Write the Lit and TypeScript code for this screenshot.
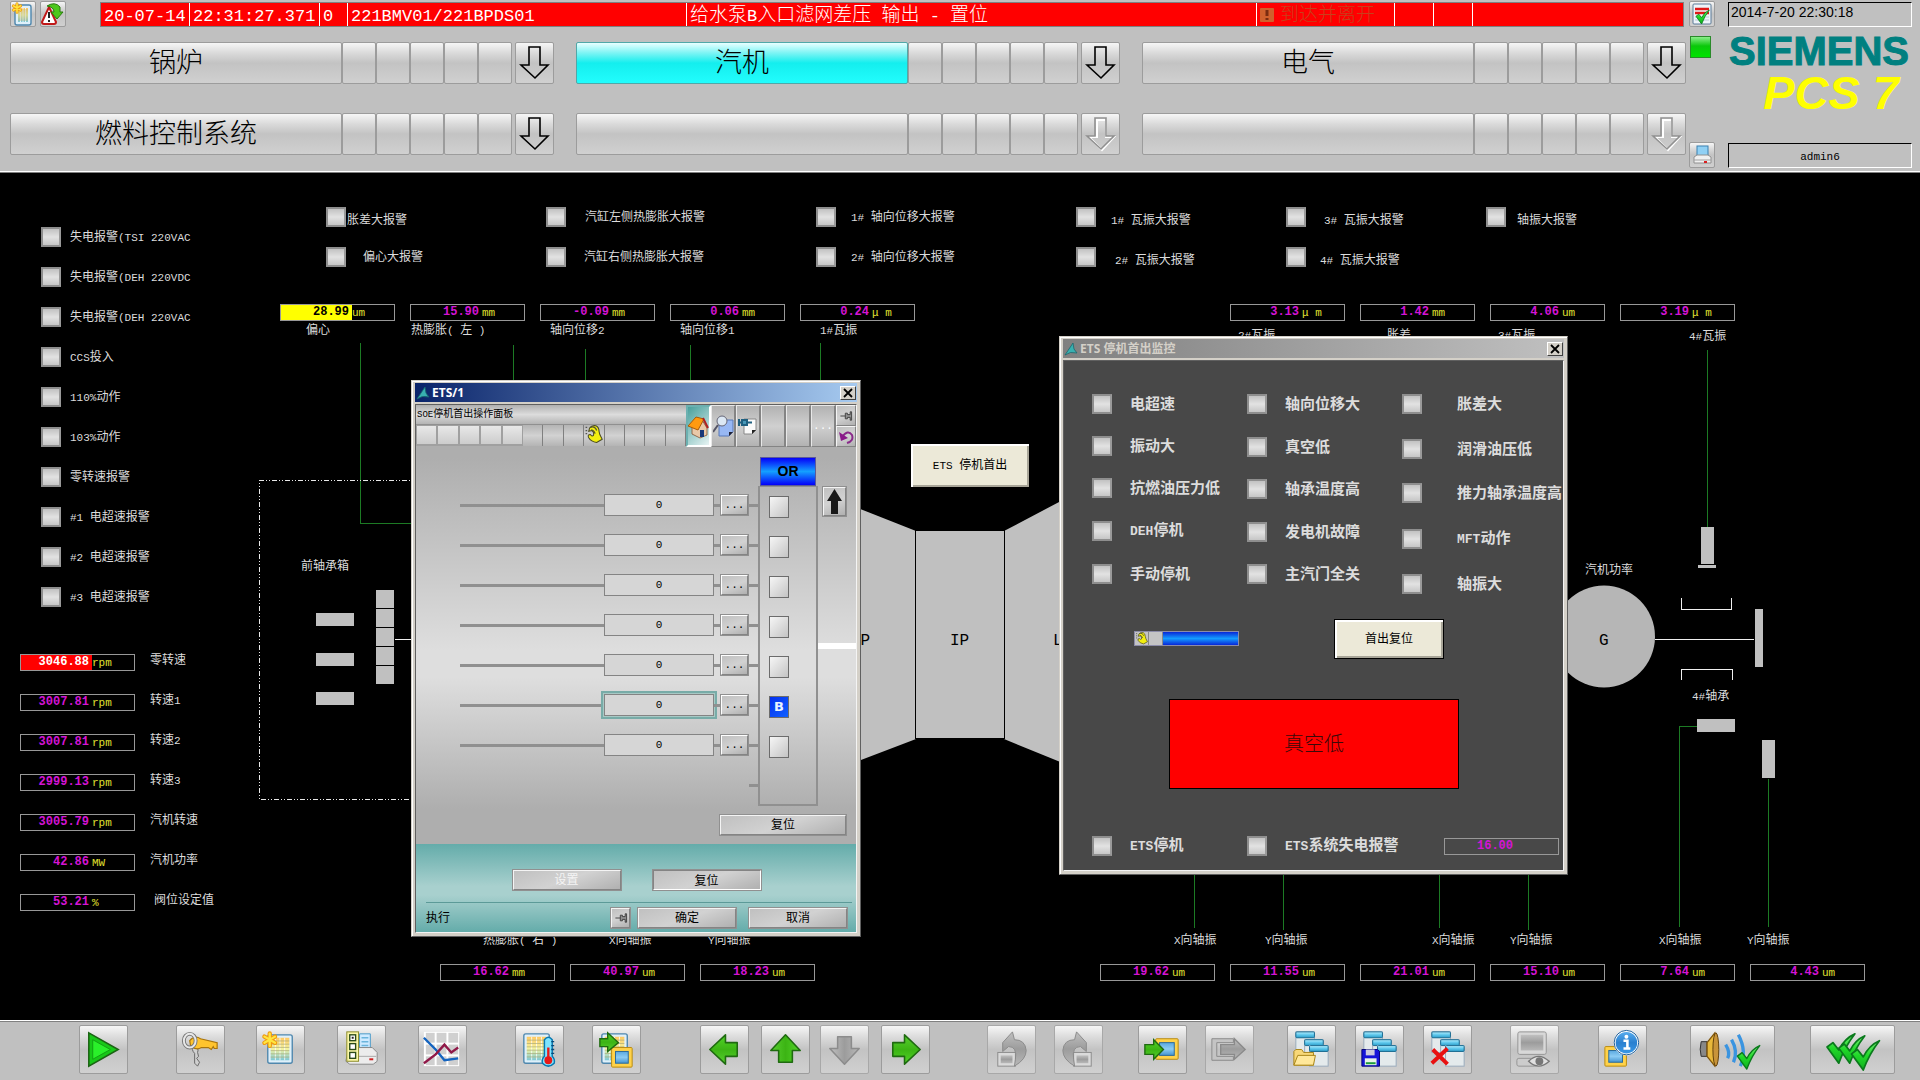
import { LitElement, html, svg, css, nothing, TemplateResult } from "lit";
import { customElement } from "lit/decorators.js";
import { classMap } from "lit/directives/class-map.js";

type Lamp = [x: number, y: number, text: string];
type Reading = { value: string; unit: string; state?: "warn" | "alarm"; text?: string };
type Placed = [x: number, value: string, unit: string, state?: "warn" | "alarm"];

/* Height of the overview area above the process picture. */
const ORIGIN = 173;

const leftLamps = [
  "失电报警(TSI 220VAC", "失电报警(DEH 220VDC", "失电报警(DEH 220VAC", "CCS投入", "110%动作",
  "103%动作", "零转速报警", "#1 电超速报警", "#2 电超速报警", "#3 电超速报警",
];

const leftReadings: Reading[] = [
  { value: "3046.88", unit: "rpm", state: "alarm", text: "零转速" },
  { value: "3007.81", unit: "rpm", text: "转速1" },
  { value: "3007.81", unit: "rpm", text: "转速2" },
  { value: "2999.13", unit: "rpm", text: "转速3" },
  { value: "3005.79", unit: "rpm", text: "汽机转速" },
  { value: "42.86", unit: "MW", text: "汽机功率" },
  { value: "53.21", unit: "%", text: "阀位设定值" },
];

const lampSpots: [number, number][] = [
  [326, 207], [326, 247], [546, 207], [546, 247], [816, 207], [816, 247],
  [1076, 207], [1076, 247], [1286, 207], [1286, 247], [1486, 207],
];

/* Captions: left edge and vertical centre. */
const captions: Lamp[] = [
  [347, 220, "胀差大报警"], [363, 257, "偏心大报警"],
  [585, 217, "汽缸左侧热膨胀大报警"], [584, 257, "汽缸右侧热膨胀大报警"],
  [851, 217, "1# 轴向位移大报警"], [851, 257, "2# 轴向位移大报警"],
  [1111, 220, "1# 瓦振大报警"], [1115, 260, "2# 瓦振大报警"],
  [1324, 220, "3# 瓦振大报警"], [1320, 260, "4# 瓦振大报警"], [1517, 220, "轴振大报警"],
  [306, 330, "偏心"], [411, 330, "热膨胀( 左 )"], [550, 330, "轴向位移2"], [680, 330, "轴向位移1"],
  [820, 330, "1#瓦振"], [1238, 335, "2#瓦振"], [1387, 335, "胀差"], [1498, 335, "3#瓦振"], [1689, 336, "4#瓦振"],
  [301, 566, "前轴承箱"], [1585, 570, "汽机功率"], [1692, 696, "4#轴承"],
  [483, 940, "热膨胀( 右 )"], [609, 940, "X向轴振"], [708, 940, "Y向轴振"],
  [1174, 940, "X向轴振"], [1265, 940, "Y向轴振"], [1432, 940, "X向轴振"], [1510, 940, "Y向轴振"],
  [1659, 940, "X向轴振"], [1747, 940, "Y向轴振"],
];

const topReadings: Placed[] = [
  [280, "28.99", "um", "warn"], [410, "15.90", "mm"], [540, "-0.09", "mm"], [670, "0.06", "mm"],
  [800, "0.24", "μ m"], [1230, "3.13", "μ m"], [1360, "1.42", "mm"], [1490, "4.06", "um"], [1620, "3.19", "μ m"],
];
const bottomReadings: Placed[] = [
  [440, "16.62", "mm"], [570, "40.97", "um"], [700, "18.23", "um"], [1100, "19.62", "um"], [1230, "11.55", "um"],
  [1360, "21.01", "um"], [1490, "15.10", "um"], [1620, "7.64", "um"], [1750, "4.43", "um"],
];

const areas: { name: string; active?: boolean; disabled?: boolean }[] = [
  { name: "锅炉" }, { name: "汽机", active: true }, { name: "电气" },
  { name: "燃料控制系统" }, { name: "", disabled: true }, { name: "", disabled: true },
];

const tripColumns: [cls: string, names: string[]][] = [
  ["c1", ["电超速", "振动大", "抗燃油压力低", "DEH停机", "手动停机"]],
  ["c2", ["轴向位移大", "真空低", "轴承温度高", "发电机故障", "主汽门全关"]],
  ["c3", ["胀差大", "润滑油压低", "推力轴承温度高", "MFT动作", "轴振大"]],
];

/* Latin runs are set in a monospaced face about half as wide as the ideographs. */
const mixed = (text: string) =>
  text.split(/([\x20-\x7eμ]+)/).filter(Boolean).map((run) =>
    /^[\x20-\x7eμ]/.test(run) ? html`<span class="latin">${run}</span>` : run);

const at = (x: number, y: number) => `left:${x}px;top:${y - ORIGIN}px`;

const sheet = (x: number, y: number, w: number, h: number) => svg`
  <rect x=${x} y=${y} width=${w} height=${h} rx="2" fill="#dff0fa" stroke="#4f87ad" stroke-width="1.4"/>
  <rect x=${x + 3} y=${y + 3} width=${w - 6} height=${h - 6} fill="url(#g-sheet)"/>
  ${[1, 2, 3].map((i) => svg`<line x1=${x + 3 + ((w - 6) * i) / 4} x2=${x + 3 + ((w - 6) * i) / 4} y1=${y + 3} y2=${y + h - 3} stroke="#fff" stroke-width=".8"/>`)}
  ${[1, 2, 3, 4, 5, 6].map((i) => svg`<line x1=${x + 3} x2=${x + w - 3} y1=${y + 3 + ((h - 6) * i) / 7} y2=${y + 3 + ((h - 6) * i) / 7} stroke="#a8a878" stroke-width=".7"/>`)}`;

const star = (x: number, y: number, k: number) => svg`
  <g transform="translate(${x} ${y}) scale(${k})" stroke="#f09a10" stroke-width="5" stroke-linecap="round">
    <path d="M0-7V7M-6-3.5L6 3.5M-6 3.5L6-3.5"/><path d="M0-7V7M-6-3.5L6 3.5M-6 3.5L6-3.5" stroke="#ffe640" stroke-width="2.6"/>
  </g>`;

const tick = (x: number, y: number, k: number) => svg`
  <path transform="translate(${x} ${y}) scale(${k})" d="M0 9L4 6L8 11Q12 3 19 0Q12 9 8 20Z" fill="url(#g-tick)" stroke="#0a7a1c" stroke-width="1.2" stroke-linejoin="round"/>`;

const pane = (x: number, y: number) => svg`
  <rect x=${x} y=${y} width="19" height="21" fill="#e4eaec" stroke="#9ab" />
  <rect x=${x} y=${y} width="19" height="6" rx="1" fill="url(#g-pane)" stroke="#1a6a90"/>`;
const panes = svg`${pane(8, 6)}${pane(17, 14)}${pane(22, 20)}`;

const frame = (x: number, y: number, w: number, h: number) => svg`
  <rect x=${x} y=${y} width=${w} height=${h} rx="1" fill="#ffd24a" stroke="#b88a10"/>
  <rect x=${x + 4} y=${y + 4} width=${w - 8} height=${h - 8} fill="url(#g-blue)" stroke="#2a6a9a"/>`;

const fatArrow = (turn: number, dim = false) => svg`
  <path transform="rotate(${turn} 24 24)" d="M9 24L25 9V17H37V31H25V39Z" fill=${dim ? "url(#g-dim)" : "url(#g-green)"} stroke=${dim ? "#8c8c8c" : "#1f6a10"} stroke-width="1.6" stroke-linejoin="round"/>`;

const hand = svg`
  <path d="M7 4Q10 0 15 1Q19 3 19 8L20 12L23 18L16 22Q9 21 6 16Q4 12 8 12Q10 15 12 13Q13 9 10 7L6 8Z" fill="#f2ee10" stroke="#4a4a20" stroke-width="1.3"/>
  <path d="M8 3Q14 1 16 7M9 6Q13 7 14 11" fill="none" stroke="#555530" stroke-width="1.6"/><path d="M2 3H4M2 7H4M2 11H4" stroke="#555" stroke-width="1.6"/>`;

const pin = svg`<path d="M1 10H8V6H11V8H15V4H17V16H15V12H11V14H8V10" fill="#909090" stroke="#444" stroke-width="1.4"/>`;

const curve = svg`
  <rect x="10" y="27" width="18" height="14" fill="#dadada" stroke="#8c8c8c"/><rect x="13" y="30" width="12" height="8" fill="url(#g-dim)"/>
  <path d="M25 6L15 17V26L21 21Q30 21 28 34L27 41Q39 34 39 25Q38 14 27 14Z" fill="url(#g-dim)" stroke="#8a8a8a" stroke-linejoin="round"/>`;

/* Bottom toolbar drawings, on a 48 unit square (wide ones on 84 by 48). */
const icons: Record<string, TemplateResult> = {
  play: svg`<path d="M9 7L39 24L9 41Z" fill="#18c818" stroke="#1c6414" stroke-width="1.6"/><path d="M13 14L31 24L13 34Z" fill="#2af02a" stroke="#12a012"/>`,
  key: svg`<path d="M17 20Q23 22 21 27L22 31L20 33L23 37L21 41L18 38V28Q14 24 17 20Z" fill="#d0d0d0" stroke="#666"/>
    <path d="M13 15Q18 9 24 13L41 17V23H38L37 21L35 24L32 22H25Q20 25 14 21Z" fill="#ffc42e" stroke="#a8740c" stroke-width="1.2"/>
    <ellipse cx="13" cy="15" rx="6" ry="7" fill="none" stroke="#777" stroke-width="4"/><ellipse cx="13" cy="15" rx="6" ry="7" fill="none" stroke="#e8e8e8" stroke-width="2"/>`,
  table: svg`${sheet(11, 9, 25, 29)}${star(13, 14, 0.9)}`,
  print: svg`<path d="M22 8H33V24H22Z" fill="#cfeaff" stroke="#4a9ac8"/><path d="M24 12H31M24 16H31M24 20H31" stroke="#6ab4dc" stroke-width="1.6"/>
    <path d="M10 26L16 22H35L40 27V36L36 39H12L8 36Z" fill="#ececec" stroke="#888"/><path d="M9 31H39" stroke="#aaa"/><rect x="32" y="33" width="4" height="2" fill="#d02020"/>
    <rect x="9" y="6" width="12" height="30" fill="#fbf8a8" stroke="#8a8a28"/>
    <g fill="#fff" stroke="#2a4a18" stroke-width="1.4"><rect x="12" y="9" width="6" height="6"/><rect x="12" y="18" width="6" height="6"/><rect x="12" y="27" width="6" height="6"/></g><rect x="14" y="11" width="2" height="2" fill="#222"/>`,
  trend: svg`<rect x="5" y="6" width="36" height="35" fill="#fff"/><g fill="#d0d0d0"><rect x="7" y="7" width="9" height="10"/><rect x="18" y="7" width="10" height="10"/><rect x="30" y="7" width="10" height="10"/><rect x="7" y="19" width="9" height="10"/><rect x="18" y="19" width="10" height="10"/><rect x="30" y="19" width="10" height="10"/><rect x="7" y="31" width="9" height="9"/><rect x="18" y="31" width="10" height="9"/><rect x="30" y="31" width="10" height="9"/></g>
    <path d="M5 12L17 24L26 35L40 33" fill="none" stroke="#1464c0" stroke-width="2.4"/><path d="M5 38L17 29L26 19L33 27L40 22" fill="none" stroke="#901848" stroke-width="2.4"/>`,
  thermo: svg`${sheet(8, 8, 26, 30)}<path d="M29 14Q33 9 37 14V31Q40 34 39 38Q33 44 27 38Q26 34 29 31Z" fill="#7fe4ff" stroke="#0878b0" stroke-width="1.5"/><circle cx="33" cy="35" r="4" fill="#e81818"/><path d="M33 22V33" stroke="#e81818" stroke-width="2.4"/><path d="M36 16H39M36 20H39M36 24H39M36 28H39" stroke="#084a78" stroke-width="1.4"/>`,
  swap: svg`${sheet(9, 8, 26, 30)}${frame(19, 22, 21, 20)}<path d="M7 13H15V7L26 17L15 26V21H7Z" fill="url(#g-green)" stroke="#1f6a10" stroke-width="1.4"/>`,
  left: svg`${fatArrow(0)}`, up: svg`${fatArrow(90)}`, down: svg`${fatArrow(270, true)}`, right: svg`${fatArrow(180)}`,
  undo: curve, redo: svg`<g transform="matrix(-1 0 0 1 47 0)">${curve}</g>`,
  enter: svg`${frame(17, 13, 23, 21)}<path d="M6 19H15V14L25 24L15 34V29H6Z" fill="url(#g-green)" stroke="#1f6a10" stroke-width="1.4"/>`,
  exit: svg`<path d="M6 13H28V17H11V31H28V35H6Z" fill="#c4c4c4" stroke="#8a8a8a"/><path d="M15 19H29V13L40 24L29 34V29H15Z" fill="url(#g-dim)" stroke="#8a8a8a" stroke-width="1.4"/>`,
  open: svg`${panes}<path d="M6 26L8 24H14L16 27H26V40H6Z" fill="#f8d878" stroke="#a88418"/><path d="M6 40L10 30H28L26 40Z" fill="#ffe89a" stroke="#a88418"/>`,
  save: svg`${panes}<path d="M6 24H22L24 26V41H6Z" fill="#1414d8" stroke="#040478"/><rect x="10" y="24" width="9" height="6" fill="#ccd"/><rect x="9" y="33" width="12" height="7" fill="#e8f4e8"/><rect x="10" y="37" width="10" height="2" fill="#1a9a3a"/>`,
  drop: svg`${panes}<path d="M9 24L24 39M24 23L8 38" stroke="#e81010" stroke-width="4"/>`,
  watch: svg`<rect x="7" y="6" width="29" height="23" rx="2" fill="#d8d8d8" stroke="#959595"/><rect x="10" y="9" width="23" height="16" fill="url(#g-dim)"/><rect x="6" y="33" width="20" height="8" rx="2" fill="#ccc" stroke="#959595"/><path d="M18 36Q28 26 39 36Q28 46 18 36Z" fill="#e0e0e0" stroke="#777" stroke-width="1.4"/><circle cx="29" cy="36" r="4" fill="#777"/>`,
  info: svg`${frame(6, 21, 22, 20)}<circle cx="28" cy="17" r="12" fill="url(#g-info)" stroke="#fff" stroke-width="2"/><circle cx="28" cy="17" r="12.5" fill="none" stroke="#1a5a94"/><circle cx="28" cy="11" r="2" fill="#fff"/><path d="M25 15H29V23M25 23H32" stroke="#fff" stroke-width="2.6" fill="none"/>`,
  sound: svg`<path d="M10 16H16V31H10Q8 24 10 16Z" fill="#888" stroke="#333"/><path d="M16 17L24 7Q29 24 24 41L16 31Z" fill="#e8b83a" stroke="#80560c" stroke-width="1.4"/><ellipse cx="25" cy="24" rx="3" ry="17" fill="#c8943a" stroke="#60400a"/>
    <g fill="none" stroke="#3a94e0" stroke-width="3.4"><path d="M35 19Q40 27 37 33"/><path d="M41 14Q48 26 43 37"/><path d="M48 9Q57 26 50 41"/></g>${tick(47, 20, 1.2)}`,
  ticks: svg`${tick(16, 8, 1.5)}${tick(28, 10, 1.4)}${tick(41, 15, 1.5)}`,
};

/* Toolbar: share of free space before the button, icon, caption. */
const tools: [space: number, icon: string, title: string, state?: "dim" | "wide"][] = [
  [79, "play", "运行"], [48, "key", "登录"], [31, "table", "报警列表"], [32, "print", "报表"], [32, "trend", "趋势"],
  [48, "thermo", "过程值"], [28, "swap", "画面切换"], [59, "left", "向左"], [12, "up", "向上"], [11, "down", "向下", "dim"],
  [12, "right", "向右"], [57, "undo", "后退", "dim"], [18, "redo", "前进", "dim"], [35, "enter", "存储画面"], [18, "exit", "调用画面", "dim"],
  [33, "open", "打开组合"], [19, "save", "保存组合"], [19, "drop", "删除组合"], [38, "watch", "监视", "dim"], [39, "info", "信息"],
  [43, "sound", "消音", "wide"], [35, "ticks", "确认", "wide"],
];

@customElement("app-root")
export class AppRoot extends LitElement {
  static styles = css`
    :host {
      display: block; --cjk: "Liberation Sans", "Noto Sans CJK SC", sans-serif; --mono: "Liberation Mono", "Noto Sans CJK SC", monospace;
      font: 12px/14px var(--cjk); color: #dcdcdc; --latin: 11px;
    }
    * { box-sizing: border-box; }
    button, input { font: inherit; color: inherit; margin: 0; padding: 0; border-radius: 0; }
    button { display: grid; place-items: center; }
    svg { display: block; }
    .latin { font-family: var(--mono); font-size: var(--latin); white-space: pre; }
    .defs { position: absolute; }
    .screen { min-height: 100vh; display: flex; flex-direction: column; background: #000; overflow: hidden; }

    .soft { border: 1px solid #9c9c9c; border-radius: 2px; background: linear-gradient(#f6f6f6, #dadada 25%, #c3c3c3 50%, #d0d0d0); }
    .top { display: flex; color: #000; background: #c0c0c0; padding: 1px 8px 0 10px; border-bottom: 1px solid #808080; box-shadow: inset 0 -1px #fff; }
    .main { flex: 1; min-width: 0; display: flex; flex-direction: column; gap: 15px; padding-bottom: 17px; }
    .line { display: flex; gap: 4px; }
    .mini { width: 26px; height: 26px; }
    .alarm { flex: 1; margin: 1px 2px 0 30px; border: 1px solid #808080; background: #f00; color: #fff; height: 25px; display: grid;
      grid-template-columns: 89px 130px 28px 339fr 570fr 138px 39px 39px 210fr; font-size: 19px; line-height: 23px; font-weight: 300; --latin: 17px; white-space: nowrap; }
    .alarm > span { padding-left: 3px; border-right: 1px solid #fff; overflow: hidden; }
    .alarm > span:last-child { border: 0; }
    .alarm .gone { color: #c8401c; display: flex; gap: 6px; align-items: center; }
    .areas { display: grid; grid-template-columns: repeat(3, minmax(0, 1fr)); gap: 29px 22px; }
    .area { display: flex; height: 42px; }
    .area .name { flex: 1; font-size: 27px; line-height: 38px; font-weight: 300; }
    .area .name.active { background: linear-gradient(#e8ffff, #7cf4f4 25%, #14eeee 50%, #22fdfd); border-color: #50a8a8; }
    .area .cell { width: 34px; }
    .area .fold { width: 39px; margin-left: 3px; }
    .side { display: flex; flex-direction: column; gap: 9px; margin: 0 13px 0 3px; padding-bottom: 4px; width: 26px; }
    .ok { width: 21px; height: 22px; margin-left: 1px; border: 1px solid #2a8a2a; background: linear-gradient(#8aee8a, #0ac80a 45%, #00e400); }
    .side :last-child { margin-top: auto; }
    .brand { width: 184px; display: flex; flex-direction: column; padding: 1px 0 4px; white-space: nowrap; }
    .inset { height: 25px; border: 1px solid; border-color: #000 #fff #fff #000; padding-left: 2px; font-size: 14px; line-height: 18px; }
    .inset.user { margin-top: auto; text-align: center; line-height: 22px; padding: 0; }
    .maker { font: bold 40px/48px "Liberation Sans", sans-serif; color: #008080; -webkit-text-stroke: 1px #008080; padding-left: 1px; }
    .product { font: italic bold 47px/36px "Liberation Sans", sans-serif; color: #ff0; text-align: right; padding-right: 13px; }

    .plant { flex: 1; position: relative; min-height: 847px; }
    .drawing { position: absolute; left: 0; top: 0; }
    .pin { position: absolute; white-space: nowrap; }
    .lamp { display: block; flex: none; width: 20px; height: 20px; border: 2px solid #8e8e8e; border-right-color: #9a9a9a; background: linear-gradient(#c2c2c2, #e2e2e2 50%, #c6c6c6); }
    .column { position: absolute; display: flex; flex-direction: column; white-space: nowrap; }
    .lamps { left: 41px; top: 54px; gap: 20px; }
    .lamps > div { display: flex; gap: 9px; align-items: center; }
    .readings { left: 20px; top: 481px; gap: 23px; }
    .readings > div { display: flex; gap: 15px; height: 17px; line-height: 12px; }
    .readings > div:last-child { gap: 19px; }
    .value { width: 115px; height: 17px; border: 1px solid #989898; display: flex; font: 11px/15px var(--mono); color: #e0e030; white-space: pre; text-align: left; }
    .value b { width: 71px; text-align: right; padding-right: 3px; font-size: 12px; color: #d414d4; }
    .value i { font-style: normal; padding-top: 1px; }
    .value.warn b { background: #ff0; color: #000; }
    .value.alarm-on b { background: #f00; color: #fff; }
    .part { font: 16px/20px "Liberation Mono", monospace; color: #000; }
    .face { color: #000; background: #ece9d8; border: 1px solid #000; box-shadow: inset 2px 2px #fff, inset -2px -2px #a8a598; white-space: nowrap; }
    .trip { width: 120px; height: 45px; }

    .window { position: absolute; display: flex; flex-direction: column; background: #d4d0c8; padding: 2px 3px 3px; border: 1px solid; border-color: #d4d0c8 #606060 #606060 #d4d0c8; box-shadow: inset 1px 1px #fff; }
    .title { display: flex; align-items: center; gap: 2px; height: 19px; padding: 0 1px; font: bold 12px/18px "Noto Sans", "Noto Sans CJK SC", sans-serif; color: #fff; background: linear-gradient(90deg, #0a246a, #a6caf0); }
    .title .grow { flex: 1; }
    .close { width: 16px; height: 14px; border: 1px solid; border-color: #fff #404040 #404040 #fff; background: #d4d0c8; }
    .body { flex: 1; margin-top: 2px; display: flex; flex-direction: column; border: 1px solid; border-color: #606060 #f4f4f4 #f4f4f4 #606060; }

    .ets { left: 411px; top: 207px; width: 450px; height: 557px; color: #000; }
    .panel { flex: 1; display: flex; flex-direction: column; background: linear-gradient(#aeaeae 12%, #dedede 56%, #dedede 62%, #aeaeae 92%); }
    .head { display: flex; height: 42px; }
    .bar { flex: 1; min-width: 0; }
    .bar .tag { height: 20px; line-height: 18px; font-size: 10px; --latin: 9px; padding-left: 1px; background: linear-gradient(#b0b0b0, #dcdcdc 50%, #b4b4b4); border-bottom: 1px solid #909090; white-space: nowrap; }
    .cells { display: flex; height: 21px; }
    .cells span { flex: 1; border-right: 1px solid #808080; background: linear-gradient(#b4b4b4, #d2d2d2 50%, #b4b4b4); }
    .cells .lit { border: 1px solid #a0a0a0; border-bottom-width: 2px; background: linear-gradient(#e8e8e8, #cccccc); }
    .raised { background: linear-gradient(160deg, #c0c0c0, #d2d2d2 50%, #b0b0b0); border: 2px solid; border-color: #f4f4f4 #848484 #848484 #f4f4f4; outline: 1px solid #909090; outline-offset: -1px; }
    .head .tab { width: 25px; border-width: 1px 2px 1px 1px; outline: 0; background: linear-gradient(#b2b2b2, #d0d0d0 50%, #b2b2b2); border-color: #e8e8e8 #848484 #848484 #e8e8e8; }
    .head .tab.on { border: 2px solid; border-color: #6cb0b0 #fff #fff #6cb0b0; background: linear-gradient(135deg, #48a09c, #e8f4f4); }
    .head .etc { color: #fff; }
    .tools2 { width: 20px; display: grid; grid-template-rows: 1fr 1fr; }
    .tools2 button { border-width: 1px; outline: 0; }
    .logic { display: grid; grid-template-columns: 342px 60px 1fr; padding-top: 10px; }
    .inputs { padding-top: 28px; }
    .input { display: grid; grid-template-columns: 44px 1fr 110px 6px 29px 9px; height: 40px; align-items: center; }
    .wire { height: 3px; background: #909090; }
    .input input { height: 22px; width: 110px; text-align: center; border: 1px solid #848484; background: #d6d6d6; font: 11px/20px var(--mono); color: #000; }
    .input.hot input { outline: 2px solid #78aca8; outline-offset: 1px; box-shadow: 0 0 0 3px #a8c8c4; }
    .more { height: 22px; border-color: #fff #848484 #848484 #fff; line-height: 12px; }
    .last .wire { grid-column: 6; }
    .gate { display: flex; flex-direction: column; height: 349px; }
    .gate strong { margin: 0 2px; height: 29px; border: 1px solid #5a5a9a; background: linear-gradient(#0400f8, #14a0ff 50%, #0400f8); font: bold 14px/27px "Liberation Sans", sans-serif; text-align: center; }
    .bits { flex: 1; border: 2px solid #909090; border-top-width: 1px; padding-left: 9px; }
    .bit { height: 40px; display: grid; align-items: center; width: 20px; }
    .bit > * { grid-area: 1 / 1; }
    .bit input { appearance: none; width: 20px; height: 22px; border: 1px solid #6c6c6c; background: linear-gradient(135deg, #f6f6f6, #c4c4c4); }
    .bit input:checked { background: linear-gradient(135deg, #0430f0, #1060ff); }
    .bit span { text-align: center; font: bold 13px/20px "DejaVu Sans", sans-serif; color: #e8f4ff; }
    .scroll { display: flex; flex-direction: column; align-items: stretch; padding-top: 29px; }
    .scroll button { width: 25px; height: 31px; margin-left: 4px; }
    .scroll i { height: 6px; margin-top: 126px; background: #fff; }
    .key { height: 22px; font-size: 12px; line-height: 16px; }
    .panel .key { width: 128px; margin: 8px 9px 0 auto; }
    .exec { height: 88px; background: linear-gradient(#64acaa, #a8d0ce 48%, #a8d0ce 58%, #64acaa); padding: 25px 9px 0 10px; }
    .pair { display: flex; justify-content: center; gap: 30px; height: 33px; }
    .pair .key { width: 110px; }
    .key[disabled] { color: #f4f4f4; }
    .key.down { border-color: #848484 #fff #fff #848484; padding-top: 2px; }
    .confirm { border-top: 1px solid #5c9a98; display: flex; align-items: center; padding: 4px 0 0; margin-right: -5px; }
    .confirm .grow { flex: 1; }
    .confirm .key { width: 100px; margin-left: 6px; }
    .confirm .key.hold { width: 21px; margin: 0; }
    .confirm .key:last-child { margin: 0 4px 0 11px; }

    .first { left: 1059px; top: 163px; width: 509px; height: 539px; }
    .first .title { background: linear-gradient(90deg, #808080, #c0c0c0); color: #d4d0c8; }
    .first .body { background: #484848; font-size: 15px; font-weight: 700; --latin: 13px; line-height: 20px; padding: 33px 3px 13px 28px; white-space: nowrap; }
    .causes { display: grid; grid-template-columns: 155px 155px 1fr; align-items: start; }
    .causes ul { list-style: none; margin: 0; padding: 0; display: flex; flex-direction: column; justify-content: space-between; height: 190px; }
    .causes .c3 { height: 200px; }
    .cause { display: flex; gap: 18px; align-items: center; }
    .c3 .cause { gap: 35px; }
    .reset { display: grid; grid-template-columns: 242px 110px; padding: 25px 0 0; align-items: center; }
    .status { width: 105px; height: 15px; margin: 0 0 2px 42px; border: 1px solid #8c8ca8; display: flex; background: linear-gradient(#0828d8, #149cff 50%, #0828d8); }
    .status span { width: 14px; background: #c4c4c4; border-right: 1px solid #888; }
    .reset button { height: 40px; font-size: 12px; font-weight: 400; }
    .cause-now { margin: 40px 101px 0 77px; height: 90px; border: 1px solid #000; background: #f00; color: #3a0a0a; font: 300 20px/88px var(--cjk); text-align: center; }
    .foot { display: grid; grid-template-columns: 155px 1fr 116px; margin-top: auto; align-items: center; }

    .bottom { display: flex; height: 60px; padding-top: 4px; background: #c0c0c0; border-top: 1px solid #fff; box-shadow: inset 0 1px #808080; }
    .gap { flex: 1 1 0; min-width: 2px; }
    .tool { width: 49px; height: 49px; flex: none; }
    .tool.wide { width: 85px; }
    .tool.dim { border-color: #a8a8a8; }
  `;

  private value(r: Reading) {
    return html`<div class=${classMap({ value: true, warn: r.state === "warn", "alarm-on": r.state === "alarm" })}><b>${r.value}</b><i>${r.unit}</i></div>`;
  }

  private placed(rows: Placed[], y: number) {
    return rows.map(([x, value, unit, state]) => html`<div class="pin" style=${at(x, y)}>${this.value({ value, unit, state })}</div>`);
  }

  private defs() {
    const g = (id: string, a: string, b: string, c: string) => svg`
      <linearGradient id=${id} x1="0" y1="0" x2="0" y2="1"><stop offset="0" stop-color=${a}/><stop offset=".5" stop-color=${b}/><stop offset="1" stop-color=${c}/></linearGradient>`;
    return html`<svg class="defs" width="0" height="0" aria-hidden="true"><defs>
      ${g("g-sheet", "#ffc860", "#f4f4a0", "#7cc8d8")}${g("g-tick", "#7af07a", "#20d828", "#10b020")}
      ${g("g-pane", "#b8f0ff", "#60c8ec", "#2a9cc8")}${g("g-blue", "#5aa8e0", "#8cccf4", "#4494d0")}
      ${g("g-green", "#52d428", "#3cb414", "#58d030")}${g("g-dim", "#c0c0c0", "#9c9c9c", "#b8b8b8")}
      ${g("g-info", "#5cb0f0", "#2a80d0", "#3a9ae8")}
    </defs></svg>`;
  }

  private header() {
    return html`<header class="top">
      <div class="main">
        <div class="line">
          <button class="mini soft" aria-label="新报警"><svg width="24" height="24" viewBox="0 0 24 24">${sheet(4, 3, 16, 20)}${star(6, 6, 0.6)}</svg></button>
          <button class="mini soft" aria-label="报警跳转"><svg width="24" height="24" viewBox="0 0 24 24">
            <path d="M8 5L15 20Q15 22 13 22H3Q1 22 1 20Z" fill="#fff" stroke="#c01818" stroke-width="2"/><path d="M8 10V16M8 18V20" stroke="#222" stroke-width="2"/>
            <path d="M6 4Q14-1 19 5V10H22L16 17L10 10H13Q13 5 6 4Z" fill="#4cc81c" stroke="#2a7a10"/></svg></button>
          <div class="alarm">
            <span>${mixed("20-07-14")}</span><span>${mixed("22:31:27.371")}</span><span>${mixed("0")}</span><span>${mixed("221BMV01/221BPDS01")}</span>
            <span>${mixed("给水泵B入口滤网差压 输出 - 置位")}</span>
            <span class="gone"><svg width="14" height="14" viewBox="0 0 14 14"><rect width="14" height="14" rx="1" fill="#d0602c"/><path d="M7 2V8M7 10V12" stroke="#7a2c10" stroke-width="3"/></svg>到达并离开</span>
            <span></span><span></span><span></span>
          </div>
        </div>
        <nav class="areas">
          ${areas.map((a) => html`<div class="area">
            <button class=${classMap({ name: true, soft: true, active: !!a.active })} aria-label=${a.name || "空"}>${a.name}</button>
            ${[0, 1, 2, 3, 4].map(() => html`<span class="cell soft"></span>`)}
            <button class="fold soft" aria-label="展开" ?disabled=${a.disabled}><svg width="32" height="36" viewBox="0 0 32 36">
              ${a.disabled ? svg`<path transform="translate(1 2)" d="M11 2H20V19H28L16 32L3 19H11Z" fill="none" stroke="#fff" stroke-width="2"/>` : nothing}
              <path d="M10 2H21V20H29L16 33L2 20H10Z" fill="none" stroke=${a.disabled ? "#909090" : "#000"} stroke-width="1.6"/></svg></button>
          </div>`)}
        </nav>
      </div>
      <div class="side">
        <button class="mini soft" aria-label="确认报警"><svg width="24" height="24" viewBox="0 0 24 24"><rect x="3" y="2" width="18" height="20" rx="1" fill="#eef4fa" stroke="#5a7a98"/>
          <path d="M5 7H19M5 11H19" stroke="#e01818" stroke-width="2.4"/><path d="M5 15H19M5 18H19" stroke="#b8c8d8"/>${tick(6, 8, 0.7)}</svg></button>
        <span class="ok"></span>
        <button class="mini soft" aria-label="打印"><svg width="24" height="24" viewBox="0 0 24 24"><rect x="7" y="3" width="11" height="11" fill="#90d0f4" stroke="#3a80b0"/><path d="M4 14L7 12H18L21 14V20H4Z" fill="#f0f0f0" stroke="#909090"/><path d="M4 17H21" stroke="#a0a0a0"/><rect x="14" y="18" width="3" height="2" fill="#d82020"/></svg></button>
      </div>
      <div class="brand">
        <div class="inset">2014-7-20 22:30:18</div>
        <div class="maker">SIEMENS</div>
        <div class="product">PCS 7</div>
        <div class="inset user">${mixed("admin6")}</div>
      </div>
    </header>`;
  }

  private drawing() {
    return html`<svg class="drawing" width="1920" height="847" viewBox="0 173 1920 847" aria-hidden="true">
      <g fill="none" stroke="#1c7a24" stroke-width="1" shape-rendering="crispEdges">
        <path d="M360.5 343V523.5H412M513.5 345V381M585.5 349V381M690.5 345V381M820.5 343V381M1707.5 350V527"/>
        <path d="M1194.5 870V928M1283.5 870V930M1439.5 870V928M1528.5 870V930M1697 726.5H1679.5V927M1768.5 779V927"/>
      </g>
      <path d="M420 480.5H259.5V799.5H420" fill="none" stroke="#e8e8e8" stroke-dasharray="5 2 1 2 1 2" shape-rendering="crispEdges"/>
      <g fill="#c0c0c0">
        <path d="M316 613h38v13h-38zM316 653h38v13h-38zM316 692h38v13h-38z"/>
        <path d="M376 590h18v18h-18zM376 609h18v18h-18zM376 628h18v18h-18zM376 647h18v18h-18zM376 666h18v18h-18z"/>
        <path d="M840 501L916 531V739L840 768ZM1004 531L1080 491V770L1004 739Z"/>
        <rect x="915.5" y="530.5" width="89" height="208" stroke="#000"/>
        <circle cx="1604" cy="636.5" r="51" fill="#b6b6b6"/>
        <path d="M1701 527h13v37h-13zM1698 565h18v3h-18zM1755 609h8v58h-8zM1697 719h38v13h-38zM1762 740h13v38h-13z"/>
      </g>
      <path d="M395 639.5H412M1655 639.5H1754M1681.5 598V609.5H1731.5V598M1681.5 680V669.5H1732.5V680" fill="none" stroke="#f0f0f0" shape-rendering="crispEdges"/>
    </svg>`;
  }

  private title(text: unknown) {
    return html`<div class="title"><svg width="14" height="14" viewBox="0 0 14 14"><path d="M1 13L9 1Q9 8 13 11Q6 9 1 13Z" fill="#38b0b0" stroke="#186a70" stroke-width=".8"/></svg>
      <span class="grow">${text}</span>
      <button class="close" aria-label="关闭"><svg width="10" height="10" viewBox="0 0 10 10"><path d="M1 1L9 9M9 1L1 9" stroke="#000" stroke-width="1.8"/></svg></button></div>`;
  }

  private etsWindow() {
    const rows = [0, 1, 2, 3, 4, 5, 6];
    return html`<section class="window ets">
      ${this.title("ETS/1")}
      <div class="body">
        <div class="panel">
          <div class="head">
            <div class="bar">
              <div class="tag">${mixed("SOE停机首出操作面板")}</div>
              <div class="cells">${[...Array(13).keys()].map((i) => html`<span class=${classMap({ lit: i < 5 })}>${i === 8 ? html`<svg width="19" height="19" viewBox="0 0 24 24">${hand}</svg>` : nothing}</span>`)}</div>
            </div>
            <button class="raised tab on" aria-label="主页"><svg width="21" height="26" viewBox="0 0 21 26"><path d="M4 13L14 7L19 15V22L12 25L4 21Z" fill="#e8c8a8" stroke="#805030" stroke-width=".8"/><path d="M0 13L8 4L16 6L10 17Z" fill="#ff9a10" stroke="#a85a08"/><path d="M15 5L20 15" stroke="#b02020" stroke-width="2"/><rect x="12" y="17" width="4" height="7" fill="#183878"/></svg></button>
            <button class="raised tab" aria-label="查看"><svg width="21" height="24" viewBox="0 0 21 24"><path d="M6 6H20V18L16 22H6Z" fill="#98b8f4" stroke="#5878b8"/><path d="M16 22V18H20Z" fill="#223"/><circle cx="9" cy="7" r="5" fill="#dce8f4" stroke="#667"/><path d="M5 11L0 18" stroke="#556" stroke-width="2"/></svg></button>
            <button class="raised tab" aria-label="固定"><svg width="21" height="24" viewBox="0 0 21 24"><path d="M6 5H18V16L14 20H6Z" fill="#fafafa" stroke="#888"/><path d="M14 20V16H18Z" fill="#222"/><path d="M1 5V12M1 8.500H4M4 6H9V11H4ZM10 8.500H14" stroke="#206080" stroke-width="2" fill="#4898b8"/></svg></button>
            <span class="raised tab"></span><span class="raised tab"></span>
            <button class="raised tab etc" aria-label="更多">${mixed("...")}</button>
            <div class="tools2">
              <button class="raised" aria-label="钉住"><svg width="16" height="14" viewBox="0 0 18 20">${pin}</svg></button>
              <button class="raised" aria-label="返回"><svg width="16" height="16" viewBox="0 0 16 16"><path d="M4 8Q10 0 14 6Q16 12 9 14" fill="none" stroke="#8a2a8a" stroke-width="2"/><path d="M1 3L3 12L10 9Z" fill="#8a1a8a"/></svg></button>
            </div>
          </div>
          <div class="logic">
            <div class="inputs">
              ${rows.map((i) => html`<div class=${classMap({ input: true, hot: i === 5 })}><span></span><i class="wire"></i>
                <input value="0" aria-label=${`输入 ${i + 1}`} /><i class="wire"></i><button class="raised more" aria-label=${`选择 ${i + 1}`}>${mixed("...")}</button><i class="wire"></i></div>`)}
              <div class="input last"><i class="wire"></i></div>
            </div>
            <div class="gate"><strong>OR</strong>
              <div class="bits">${rows.map((i) => html`<label class="bit"><input type="checkbox" aria-label=${`通道 ${i + 1}`} .checked=${i === 5} />${i === 5 ? html`<span>B</span>` : nothing}</label>`)}</div>
            </div>
            <div class="scroll"><button class="raised" aria-label="上翻"><svg width="17" height="25" viewBox="0 0 17 25"><path d="M8.500 0L16 12H12V25H5V12H1Z" fill="#181818"/></svg></button><i></i></div>
          </div>
          <button class="raised key">复位</button>
        </div>
        <div class="exec">
          <div class="pair"><button class="raised key" disabled>设置</button><button class="raised key down">复位</button></div>
          <div class="confirm"><span class="grow">执行</span><button class="raised key hold" aria-label="保持"><svg width="14" height="14" viewBox="0 0 18 20">${pin}</svg></button>
            <button class="raised key">确定</button><button class="raised key">取消</button></div>
        </div>
      </div>
    </section>`;
  }

  private firstOutWindow() {
    const cause = (name: string) => html`<span class="lamp"></span><span>${mixed(name)}</span>`;
    return html`<section class="window first">
      ${this.title("ETS 停机首出监控")}
      <div class="body">
        <div class="causes">${tripColumns.map(([cls, names]) => html`<ul class=${cls}>${names.map((n) => html`<li class="cause">${cause(n)}</li>`)}</ul>`)}</div>
        <div class="reset"><div class="status"><span><svg width="13" height="13" viewBox="0 0 24 24">${hand}</svg></span><span></span></div><button class="face">首出复位</button></div>
        <div class="cause-now">真空低</div>
        <div class="foot"><div class="cause">${cause("ETS停机")}</div><div class="cause">${cause("ETS系统失电报警")}</div>${this.value({ value: "16.00", unit: "" })}</div>
      </div>
    </section>`;
  }

  render() {
    return html`${this.defs()}<div class="screen">
      ${this.header()}
      <main class="plant">
        ${this.drawing()}
        <div class="column lamps">${leftLamps.map((t) => html`<div><span class="lamp"></span><span>${mixed(t)}</span></div>`)}</div>
        <div class="column readings">${leftReadings.map((r) => html`<div>${this.value(r)}<span>${mixed(r.text!)}</span></div>`)}</div>
        ${lampSpots.map(([x, y]) => html`<span class="pin lamp" style=${at(x, y)}></span>`)}
        ${captions.map(([x, y, t]) => html`<span class="pin" style=${at(x, y - 7)}>${mixed(t)}</span>`)}
        ${this.placed(topReadings, 304)}${this.placed(bottomReadings, 964)}
        ${([[851, "HP"], [950, "IP"], [1053, "LP"], [1599, "G"]] as [number, string][]).map(([x, t]) => html`<span class="pin part" style=${at(x, 631)}>${t}</span>`)}
        <button class="pin face trip" style=${at(910, 443)}><span>${mixed("ETS 停机首出")}</span></button>
        ${this.etsWindow()}${this.firstOutWindow()}
      </main>
      <footer class="bottom">
        ${tools.map(([space, icon, title, state]) => html`<span class="gap" style="flex-grow:${space}"></span>
          <button class=${classMap({ tool: true, soft: true, dim: state === "dim", wide: state === "wide" })} aria-label=${title} ?disabled=${state === "dim"}>
            <svg width=${state === "wide" ? 83 : 47} height="47" viewBox=${state === "wide" ? "0 0 84 48" : "0 0 48 48"}>${icons[icon]}</svg></button>`)}
        <span class="gap" style="flex-grow:25"></span>
      </footer>
    </div>`;
  }
}
